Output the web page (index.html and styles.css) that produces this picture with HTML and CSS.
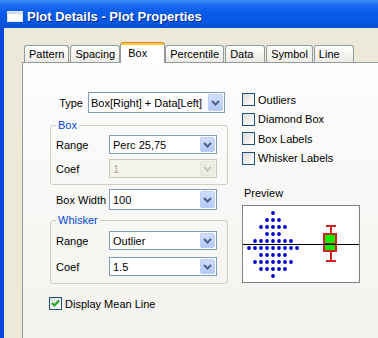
FILE: index.html
```html
<!DOCTYPE html>
<html lang="en">
<head>
    <meta charset="UTF-8">
    <title>Plot Details - Plot Properties</title>
    <link rel="stylesheet" href="styles.css">
</head>
<body>
    <div class="window">
        <div class="titlebar">
            <svg class="app-icon" width="16" height="11" viewBox="0 0 16 11">
                <rect x="0.5" y="0.5" width="15" height="10" fill="#fff" stroke="#dfe8fb"/>
                <rect x="1" y="1" width="14" height="2" fill="#cfdcf8"/>
            </svg>
            <span class="title">Plot Details - Plot Properties</span>
        </div>

        <div class="client">
            <div class="tabs">
                <div class="tab">Pattern</div>
                <div class="tab">Spacing</div>
                <div class="tab active">Box</div>
                <div class="tab">Percentile</div>
                <div class="tab">Data</div>
                <div class="tab">Symbol</div>
                <div class="tab">Line</div>
            </div>

            <div class="panel">
                <div class="left">
                    <div class="row type-row">
                        <label>Type</label>
                        <div class="combo type-combo">
                            <span>Box[Right] + Data[Left]</span>
                            <span class="arrow"><svg width="9" height="6" viewBox="0 0 9 6"><polyline points="1,1 4.5,4.5 8,1"/></svg></span>
                        </div>
                    </div>

                    <fieldset class="group box-group">
                        <legend>Box</legend>
                        <div class="rows">
                            <div class="row">
                                <label>Range</label>
                                <div class="combo small">
                                    <span>Perc 25,75</span>
                                    <span class="arrow"><svg width="9" height="6" viewBox="0 0 9 6"><polyline points="1,1 4.5,4.5 8,1"/></svg></span>
                                </div>
                            </div>
                            <div class="row">
                                <label>Coef</label>
                                <div class="combo small disabled">
                                    <span>1</span>
                                    <span class="arrow"><svg width="9" height="6" viewBox="0 0 9 6"><polyline points="1,1 4.5,4.5 8,1"/></svg></span>
                                </div>
                            </div>
                        </div>
                    </fieldset>

                    <div class="row width-row">
                        <label>Box Width</label>
                        <div class="combo">
                            <span>100</span>
                            <span class="arrow"><svg width="9" height="6" viewBox="0 0 9 6"><polyline points="1,1 4.5,4.5 8,1"/></svg></span>
                        </div>
                    </div>

                    <fieldset class="group whisker-group">
                        <legend>Whisker</legend>
                        <div class="rows">
                            <div class="row">
                                <label>Range</label>
                                <div class="combo small">
                                    <span>Outlier</span>
                                    <span class="arrow"><svg width="9" height="6" viewBox="0 0 9 6"><polyline points="1,1 4.5,4.5 8,1"/></svg></span>
                                </div>
                            </div>
                            <div class="row">
                                <label>Coef</label>
                                <div class="combo small">
                                    <span>1.5</span>
                                    <span class="arrow"><svg width="9" height="6" viewBox="0 0 9 6"><polyline points="1,1 4.5,4.5 8,1"/></svg></span>
                                </div>
                            </div>
                        </div>
                    </fieldset>

                    <div class="check-row mean-row">
                        <span class="check"><svg width="11" height="11" viewBox="0 0 11 11"><polyline points="2,5 4.5,7.5 9,2.5"/></svg></span>
                        <span>Display Mean Line</span>
                    </div>
                </div>

                <div class="right">
                    <div class="checks">
                        <div class="check-row"><span class="check"></span><span>Outliers</span></div>
                        <div class="check-row"><span class="check"></span><span>Diamond Box</span></div>
                        <div class="check-row"><span class="check"></span><span>Box Labels</span></div>
                        <div class="check-row"><span class="check"></span><span>Whisker Labels</span></div>
                    </div>

                    <div class="preview-label">Preview</div>
                    <svg class="preview" id="preview" width="118" height="78" viewBox="0 0 118 78"></svg>
                </div>
            </div>
        </div>
    </div>

    <script>
        // dot column of the preview: dots per row, centred on one x
        const counts = [1, 3, 5, 3, 7, 9, 5, 7, 5, 1];
        const svg = document.getElementById('preview');
        let html = '<rect x="0.5" y="0.5" width="117" height="77" fill="#fff" stroke="#808080"/>';

        counts.forEach(function(n, row) {
            const y = 8 + row * 7;
            for (let j = 0; j < n; j++) {
                const x = 31 + 6 * (j - (n - 1) / 2);
                html += `<circle cx="${x}" cy="${y}" r="1.9" fill="#0000cc"/>`;
            }
        });

        // box and whiskers
        html += '<line x1="89" y1="21" x2="89" y2="56" stroke="#d42020" stroke-width="2"/>';
        html += '<line x1="84" y1="21" x2="94" y2="21" stroke="#d42020" stroke-width="2"/>';
        html += '<line x1="84" y1="56" x2="94" y2="56" stroke="#d42020" stroke-width="2"/>';
        html += '<rect x="82" y="29" width="12" height="17" fill="#00f000" stroke="#d42020" stroke-width="2"/>';
        html += '<line x1="82" y1="38.5" x2="94" y2="38.5" stroke="#a01010" stroke-width="1"/>';
        html += '<line x1="1" y1="39.5" x2="117" y2="39.5" stroke="#000" stroke-width="1"/>';

        svg.innerHTML = html;
    </script>
</body>
</html>
```

FILE: styles.css
```css
* {
    margin: 0;
    padding: 0;
    box-sizing: border-box;
}

body {
    width: 378px;
    height: 338px;
    overflow: hidden;
    font-family: "Liberation Sans", Arial, sans-serif;
    font-size: 11px;
    color: #000;
    background: #ece9d8;
}

.window {
    height: 338px;
    display: flex;
    flex-direction: column;
}

.titlebar {
    height: 28px;
    flex-shrink: 0;
    display: flex;
    align-items: center;
    gap: 4px;
    padding: 4px 0 0 7px;
    background: linear-gradient(#3d8ef7 0, #1a6cf0 18%, #0a5ce8 45%, #0657e4 80%, #0a4fd2 100%);
    color: #fff;
    font-size: 13px;
    font-weight: bold;
}

.title {
    text-shadow: 1px 1px #0a2a8c;
}

.client {
    flex: 1;
    border-left: 4px solid #0b48dc;
    padding: 14px 0 0 18px;
    overflow: hidden;
}

.tabs {
    display: flex;
    align-items: flex-end;
    gap: 1px;
    height: 20px;
    padding-left: 2px;
}

.tab {
    height: 17px;
    min-width: 40px;
    padding: 0 4px;
    display: flex;
    align-items: center;
    border: 1px solid #919b9c;
    border-bottom: none;
    border-radius: 3px 3px 0 0;
    background: linear-gradient(#ffffff, #ebeae4);
}

.tab.active {
    position: relative;
    height: 21px;
    min-width: 45px;
    margin: 0 -1px -1px;
    padding: 0 7px;
    border-top: 1px solid #e68b2c;
    background: linear-gradient(#ffc73c 0, #ffc73c 2px, #ffffff 2px);
}

.panel {
    width: 420px;
    height: 300px;
    display: flex;
    border: 1px solid #919b9c;
    background: linear-gradient(#fdfdfe, #f3f2ed 280px);
}

.left {
    width: 178px;
    margin-left: 27px;
    padding-top: 29px;
    display: flex;
    flex-direction: column;
}

.right {
    margin-left: 14px;
    padding-top: 30px;
}

.row {
    display: flex;
    align-items: center;
}

.row label {
    width: 53px;
}

.type-row {
    justify-content: flex-end;
    gap: 5px;
    padding-right: 3px;
}

.type-row label {
    width: auto;
}

.combo {
    width: 108px;
    height: 21px;
    display: flex;
    align-items: center;
    justify-content: space-between;
    padding-left: 3px;
    border: 1px solid #7f9db9;
    background: #fff;
}

.combo.small {
    height: 19px;
}

.type-combo {
    width: 137px;
    padding-left: 2px;
}

.arrow {
    width: 15px;
    height: calc(100% - 2px);
    margin-right: 1px;
    display: flex;
    align-items: center;
    justify-content: center;
    border: 1px solid #bccff8;
    border-radius: 2px;
    background: linear-gradient(#d2defd, #b4c8f7);
}

.arrow polyline {
    fill: none;
    stroke: #4d6185;
    stroke-width: 2;
}

.combo.disabled {
    border-color: #c9c7ba;
    background: #f5f4ea;
    color: #aca899;
}

.combo.disabled .arrow {
    border-color: #e6e5dc;
    background: #eeede5;
}

.combo.disabled .arrow polyline {
    stroke: #c9c7ba;
}

.group {
    border: 1px solid #d0d0bf;
    border-radius: 3px;
}

.group legend {
    padding: 0 2px;
    line-height: 13px;
    color: #0046d5;
}

.rows {
    display: flex;
    flex-direction: column;
}

.box-group {
    margin-top: 6px;
    padding: 3px 10px 6px 5px;
}

.box-group .rows {
    gap: 5px;
}

.width-row {
    margin-top: 4px;
    padding-left: 6px;
}

.whisker-group {
    margin-top: 4px;
    padding: 4px 10px 7px 5px;
}

.whisker-group .rows {
    gap: 7px;
}

.check-row {
    height: 13px;
    display: flex;
    align-items: center;
    gap: 3px;
}

.check {
    width: 13px;
    height: 13px;
    flex-shrink: 0;
    display: flex;
    border: 1px solid #1c5180;
    background: linear-gradient(135deg, #dcdcd7, #ffffff);
}

.check polyline {
    fill: none;
    stroke: #21a121;
    stroke-width: 2;
}

.mean-row {
    margin-top: 13px;
    margin-left: -1px;
}

.checks {
    display: flex;
    flex-direction: column;
    gap: 6.5px;
}

.preview-label {
    margin-top: 22px;
    padding-left: 2px;
    line-height: 13px;
}

.preview {
    display: block;
    margin-top: 5px;
}
```
